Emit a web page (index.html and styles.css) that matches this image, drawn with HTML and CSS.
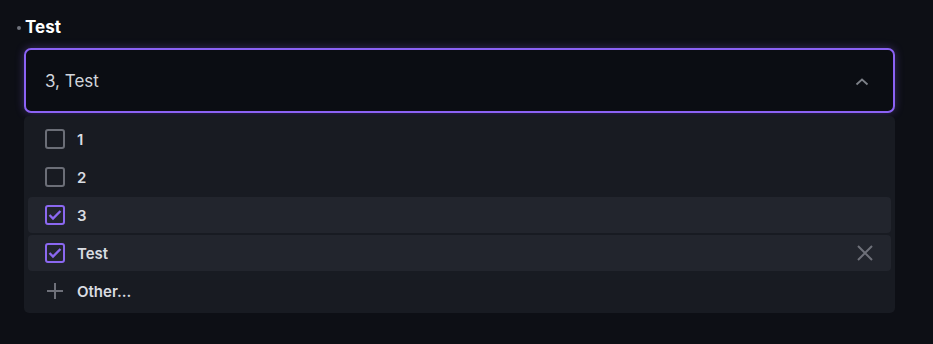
FILE: index.html
```html
<!DOCTYPE html>
<html>
<head>
<meta charset="utf-8">
<link rel="stylesheet" href="styles.css">
</head>
<body>
<div class="field">
  <div class="label"><span class="dot"></span>Test</div>
  <div class="select">
    <span class="value">3, Test</span>
    <svg class="chev" width="14" height="10" viewBox="0 0 14 10"><path d="M1.5 7.5 L7 2.5 L12.5 7.5" fill="none" stroke="#7d8088" stroke-width="1.8"/></svg>
  </div>
  <div class="menu">
    <div class="row"><span class="box"></span><span class="txt">1</span></div>
    <div class="row"><span class="box"></span><span class="txt">2</span></div>
    <div class="row on"><span class="box checked"><svg width="14" height="12" viewBox="0 0 14 12"><path d="M1.5 6 L5 9.5 L12.5 2" fill="none" stroke="#8b68f0" stroke-width="2.4"/></svg></span><span class="txt">3</span></div>
    <div class="row on"><span class="box checked"><svg width="14" height="12" viewBox="0 0 14 12"><path d="M1.5 6 L5 9.5 L12.5 2" fill="none" stroke="#8b68f0" stroke-width="2.4"/></svg></span><span class="txt">Test</span>
      <svg class="x" width="18" height="18" viewBox="0 0 18 18"><path d="M2 2 L16 16 M16 2 L2 16" stroke="#6e7079" stroke-width="2"/></svg>
    </div>
    <div class="row"><svg class="plus" width="18" height="18" viewBox="0 0 18 18"><path d="M9 1 V17 M1 9 H17" stroke="#6e7079" stroke-width="2"/></svg><span class="txt">Other...</span></div>
  </div>
</div>
</body>
</html>
```
FILE: styles.css
```css
html, body {
  margin: 0;
  background: #0d0f15;
  font-family: Inter, "Noto Sans", sans-serif;
}
.field {
  padding: 15px 38px 0 24px;
  width: 871px;
}
.label {
  position: relative;
  font-size: 17px;
  font-weight: 700;
  color: #ffffff;
  line-height: 24px;
  padding-left: 1px;
}
.dot {
  position: absolute;
  left: -7px;
  top: 11px;
  width: 4px;
  height: 4px;
  border-radius: 50%;
  background: #70737c;
}
.select {
  margin-top: 9px;
  height: 61px;
  border: 2px solid #8b62f5;
  border-radius: 7px;
  background: #0b0d13;
  box-shadow: 0 0 8px rgba(139, 98, 245, 0.35);
  display: flex;
  align-items: center;
  justify-content: space-between;
  padding: 0 24px 0 19px;
}
.value {
  font-size: 17px;
  color: #d2d5dc;
}
.chev {
  margin-top: 2px;
}
.menu {
  margin-top: 3px;
  background: #181b22;
  border-radius: 5px;
  padding: 5px 4px 4px 4px;
  display: flex;
  flex-direction: column;
  gap: 2px;
}
.row {
  height: 36px;
  display: flex;
  align-items: center;
  padding: 0 17px;
  border-radius: 4px;
}
.row.on {
  background: #22252d;
}
.box {
  width: 16px;
  height: 16px;
  border: 2px solid #6b6e77;
  border-radius: 3px;
  display: flex;
  align-items: center;
  justify-content: center;
  flex: none;
}
.box.checked {
  border-color: #8b68f0;
}
.txt {
  margin-left: 12px;
  font-size: 15px;
  font-weight: 600;
  color: #d9dce1;
}
.x {
  margin-left: auto;
}
.plus {
  margin-left: 1px;
  margin-right: 1px;
}
```
